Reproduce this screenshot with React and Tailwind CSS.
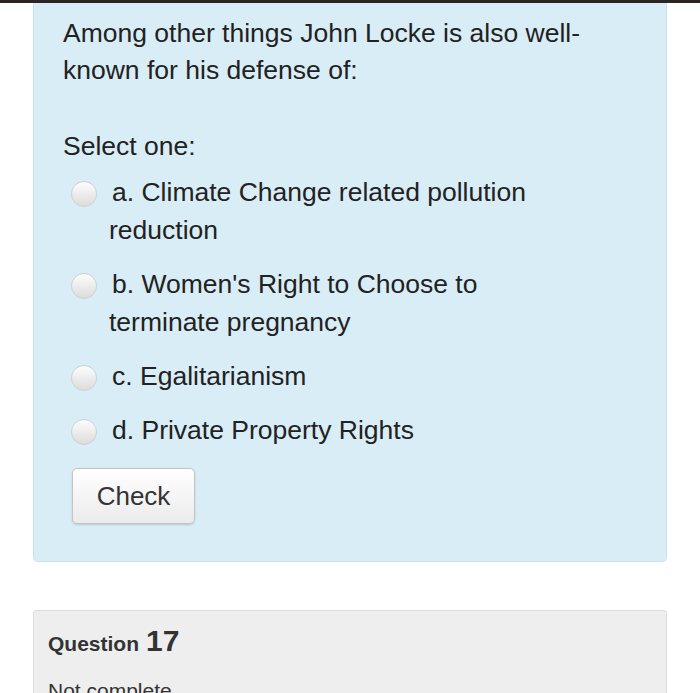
import React from 'react';

const options = [
  ['a. Climate Change related pollution', 'reduction'],
  ["b. Women's Right to Choose to", 'terminate pregnancy'],
  ['c. Egalitarianism'],
  ['d. Private Property Rights'],
];

const Radio = () => (
  <span className="inline-block w-[26px] h-[26px] -ml-[38px] mr-[15px] align-[-6px] rounded-full border border-[#cfcfcf] bg-gradient-to-b from-[#fdfdfd] to-[#dcdcdc] shadow-[inset_0_1px_1px_rgba(255,255,255,0.9)]" />
);

const App = () => {
  return (
    <div className="w-[700px] h-[693px] overflow-hidden bg-white text-[#222] font-['Liberation_Sans',Arial,sans-serif]">
      <div className="h-[3px] bg-[#2b2420]" />

      <div className="px-[33px]">
        {/* Question text panel */}
        <div className="bg-[#d9edf7] border border-t-0 border-[#c6e2ef] rounded-b-[5px] pt-[12px] pb-[37px] pl-[29px] pr-[10px]">
          <p className="text-[26.5px] leading-[37px]">
            Among other things John Locke is also well-<br />known for his defense of:
          </p>

          <p className="mt-[39px] text-[26.5px] leading-[37px]">Select one:</p>

          <div className="mt-[8px] pl-[46px] flex flex-col gap-[16px]">
            {options.map((lines, i) => (
              <div key={i} className="text-[26.5px] leading-[38px] whitespace-nowrap">
                <Radio />
                {lines[0]}
                {lines[1] && (
                  <>
                    <br />
                    {lines[1]}
                  </>
                )}
              </div>
            ))}
          </div>

          <button className="mt-[19px] ml-[9px] w-[123px] h-[56px] rounded-[5px] border border-[#c4c4c4] bg-gradient-to-b from-white to-[#ebebeb] shadow-[0_1px_2px_rgba(0,0,0,0.15)] text-[26px] text-[#333]">
            Check
          </button>
        </div>

        {/* Next question info */}
        <div className="mt-[48px] bg-[#eeeeee] border border-b-0 border-[#dddddd] rounded-t-[4px] pl-[14px] pt-[7px] h-[200px]">
          <div className="flex items-baseline gap-[7px] text-[#333] font-bold">
            <span className="text-[21px]">Question</span>
            <span className="text-[30px]">17</span>
          </div>
          <p className="mt-[12px] text-[21px] text-[#333]">Not complete</p>
        </div>
      </div>
    </div>
  );
};

export default App;
